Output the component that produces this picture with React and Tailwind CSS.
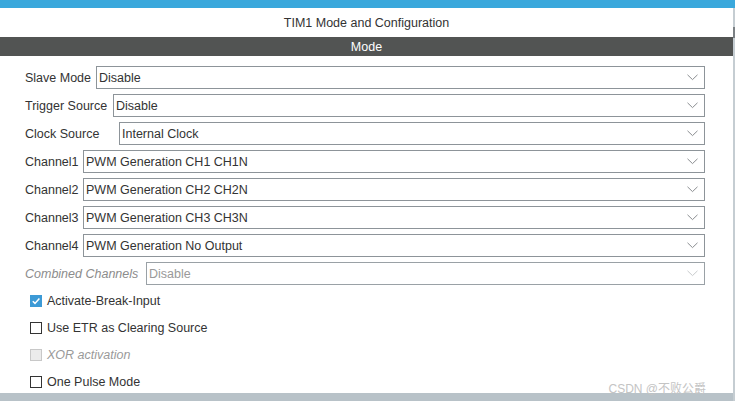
import React from "react";

function Chevron({ light }) {
  return (
    <svg width="11" height="7" viewBox="0 0 11 7" className="shrink-0">
      <path d="M0.5 0.8 L5.5 5.6 L10.5 0.8" fill="none" stroke={light ? "#c8cbcd" : "#8a8d90"} strokeWidth="1" />
    </svg>
  );
}

function SelectRow({ label, labelW, value, disabled }) {
  return (
    <div className="flex items-center h-[23px] pr-[28px]">
      <div
        className={`shrink-0 whitespace-nowrap ${labelW} ${disabled ? "italic text-[#8c8c8c]" : "text-[#333]"}`}
      >
        {label}
      </div>
      <div
        className={`flex-1 h-[23px] flex items-center justify-between pl-[2px] pr-[6px] border bg-white ${
          disabled ? "border-[#9aa1a6] text-[#9a9a9a]" : "border-[#8d9499] text-[#333]"
        }`}
      >
        <span className="whitespace-nowrap">{value}</span>
        <Chevron light={disabled} />
      </div>
    </div>
  );
}

function Check({ label, checked, disabled }) {
  return (
    <div className="flex items-center h-[27px] pl-[5px]">
      <div
        className={`w-[12px] h-[12px] shrink-0 flex items-center justify-center ${
          checked
            ? "bg-[#3c9ad6]"
            : disabled
            ? "border border-[#c8c8c8] bg-[#ebebeb]"
            : "border border-[#333] bg-white"
        }`}
      >
        {checked && (
          <svg width="10" height="10" viewBox="0 0 10 10">
            <path d="M1.8 5.2 L4 7.4 L8.4 2.4" fill="none" stroke="#fff" strokeWidth="1.5" />
          </svg>
        )}
      </div>
      <span
        className={`ml-[5px] whitespace-nowrap ${disabled ? "italic text-[#9a9a9a]" : "text-[#333]"}`}
      >
        {label}
      </span>
    </div>
  );
}

export default function App() {
  return (
    <div
      className="w-[735px] h-[401px] bg-white flex flex-col overflow-hidden relative text-[12.5px] leading-[16px]"
      style={{ fontFamily: '"Liberation Sans", Arial, sans-serif' }}
    >
      <div className="h-[8px] bg-[#3aa8dc] shrink-0" />
      <div className="flex-1 flex min-h-0">
        <div className="flex-1 flex flex-col min-w-0">
          <div className="h-[29px] shrink-0 flex items-center justify-center text-[#333]">
            TIM1 Mode and Configuration
          </div>
          <div className="h-[19px] shrink-0 bg-[#525453] text-white flex items-center justify-center">
            Mode
          </div>
          <div className="flex-1 min-h-0 overflow-hidden pl-[25px] pt-[10px] flex flex-col">
            <div className="flex flex-col gap-[5px]">
              <SelectRow label="Slave Mode" labelW="w-[71px]" value="Disable" />
              <SelectRow label="Trigger Source" labelW="w-[88px]" value="Disable" />
              <SelectRow label="Clock Source" labelW="w-[94px]" value="Internal Clock" />
              <SelectRow label="Channel1" labelW="w-[58px]" value="PWM Generation CH1 CH1N" />
              <SelectRow label="Channel2" labelW="w-[58px]" value="PWM Generation CH2 CH2N" />
              <SelectRow label="Channel3" labelW="w-[58px]" value="PWM Generation CH3 CH3N" />
              <SelectRow label="Channel4" labelW="w-[58px]" value="PWM Generation No Output" />
              <SelectRow label="Combined Channels" labelW="w-[121px]" value="Disable" disabled />
            </div>
            <div className="flex flex-col mt-[2px]">
              <Check label="Activate-Break-Input" checked />
              <Check label="Use ETR as Clearing Source" />
              <Check label="XOR activation" disabled />
              <Check label="One Pulse Mode" />
            </div>
          </div>
          <div className="h-[8px] shrink-0 bg-[#b8c2c8]" />
        </div>
        <div className="w-[2px] shrink-0 bg-[#c5cdd2] flex flex-col">
          <div className="h-[19px]" />
          <div className="h-[11px] bg-[#7b8084]" />
        </div>
      </div>
      <div className="absolute right-[29px] bottom-[5px] text-[12px] leading-[14px] text-[#c4c4c4] whitespace-nowrap" style={{ fontFamily: '"Liberation Sans", "Noto Sans CJK SC", sans-serif' }}>
        CSDN @不败公爵
      </div>
    </div>
  );
}
